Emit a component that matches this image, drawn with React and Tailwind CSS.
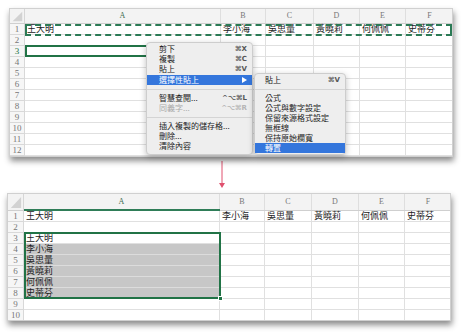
import React from "react";

const CJK = "font-['Noto_Sans_CJK_TC','Noto_Sans',sans-serif]";
const SERIF = "font-['Liberation_Serif',serif]";
const SYM = "font-['DejaVu_Sans',sans-serif]";

const NAMES = ["王大明", "李小海", "吳思量", "黃曉莉", "何佩佩", "史蒂芬"];
const LETTERS = ["A", "B", "C", "D", "E", "F"];

const TOP_COLS = ["w-[15px]", "w-[196px]", "w-[45px]", "w-[48px]", "w-[46px]", "w-[46px]", "w-[48px]"];
const BOT_COLS = ["w-[16px]", "w-[196px]", "w-[45px]", "w-[47px]", "w-[47px]", "w-[46px]", "w-[47px]"];

function Corner() {
  return (
    <svg width="100%" height="100%" viewBox="0 0 16 16" preserveAspectRatio="none">
      <polygon points="14,3 14,14 3,14" fill="#d2d2d2" />
    </svg>
  );
}

function Header({ cols, h, active }) {
  return (
    <div className={`flex ${h} bg-[#f3f3f3] border-b border-[#cfcfcf]`}>
      <div className={`${cols[0]} shrink-0 border-r border-[#d6d6d6]`}>
        <Corner />
      </div>
      {LETTERS.map((l, i) => (
        <div
          key={l}
          className={`${cols[i + 1]} shrink-0 flex items-center justify-center border-r border-[#dedede] text-[8px] ${SERIF} ${
            i === 0 && active ? "text-[#3c6b52]" : "text-[#777]"
          }`}
        >
          {l}
        </div>
      ))}
    </div>
  );
}

function Row({ cols, num, cells, numColor = "text-[#777]", fillA }) {
  return (
    <div className="flex h-[11px]">
      <div
        className={`${cols[0]} shrink-0 bg-[#f6f6f6] border-r border-b border-[#d8d8d8] text-[9px] leading-[10px] text-center ${SERIF} ${numColor}`}
      >
        {num}
      </div>
      {LETTERS.map((l, i) => (
        <div
          key={l}
          className={`${cols[i + 1]} shrink-0 flex items-center border-r border-b pl-[2px] ${
            i === 0 && fillA ? "bg-[#c7c7c7] border-b-[#dcdcdc] border-r-[#e0e0e0]" : "border-[#e0e0e0]"
          }`}
        >
          {cells[i] && (
            <span className={`block h-[10px] text-[9px] leading-[10px] text-[#222] whitespace-nowrap ${CJK}`}>
              {cells[i]}
            </span>
          )}
        </div>
      ))}
    </div>
  );
}

function Item({ label, shortcut, hl, dim, arrow, pl = "pl-[12px]" }) {
  return (
    <div
      className={`flex items-center justify-between h-[10px] ${pl} pr-[5px] text-[8px] leading-[10px] ${
        hl ? "bg-[#3476dc] text-white" : dim ? "text-[#a9a9a9]" : "text-[#222]"
      }`}
    >
      <span className={CJK}>{label}</span>
      {shortcut && (
        <span className={`${SYM} text-[7px] font-bold ${hl ? "text-white" : dim ? "text-[#b5b5b5]" : "text-[#555]"}`}>
          {shortcut}
        </span>
      )}
      {arrow && (
        <svg width="5" height="6" viewBox="0 0 5 6">
          <polygon points="0,0 5,3 0,6" fill="#ffffff" />
        </svg>
      )}
    </div>
  );
}

function Sep() {
  return (
    <div className="h-[8px] flex items-center">
      <div className="h-px w-full bg-[#d4d4d4]" />
    </div>
  );
}

function ContextMenu() {
  return (
    <div className="absolute left-[136px] top-[33px] w-[107px] h-[113px] bg-[#eeeeee] border border-[#cdcdcd] rounded-[4px] shadow-[0_2px_6px_rgba(0,0,0,0.25)] pt-[1px]">
      <Item label="剪下" shortcut="⌘X" />
      <Item label="複製" shortcut="⌘C" />
      <Item label="貼上" shortcut="⌘V" />
      <div className="h-px" />
      <Item label="選擇性貼上" hl arrow />
      <Sep />
      <Item label="智慧查閱..." shortcut="^⌥⌘L" />
      <Item label="同義字..." shortcut="^⌥⌘R" dim />
      <Sep />
      <Item label="插入複製的儲存格..." />
      <Item label="刪除..." />
      <Item label="清除內容" />
    </div>
  );
}

function SubMenu() {
  return (
    <div className="absolute left-[244px] top-[64px] w-[92px] h-[82px] bg-[#eeeeee] border border-[#cdcdcd] rounded-[4px] shadow-[0_2px_6px_rgba(0,0,0,0.25)] pt-[1px]">
      <Item label="貼上" shortcut="⌘V" pl="pl-[10px]" />
      <Sep />
      <Item label="公式" pl="pl-[10px]" />
      <Item label="公式與數字設定" pl="pl-[10px]" />
      <Item label="保留來源格式設定" pl="pl-[10px]" />
      <Item label="無框線" pl="pl-[10px]" />
      <Item label="保持原始欄寬" pl="pl-[10px]" />
      <Item label="轉置" hl pl="pl-[10px]" />
    </div>
  );
}

function TopSheet() {
  const rows = Array.from({ length: 12 }, (_, i) => i + 1);
  return (
    <div className="relative ml-[9px] w-[444px] h-[149px] bg-white border border-[#d0d0d0] shadow-[1px_4px_6px_rgba(0,0,0,0.45)]">
      <div className="overflow-hidden h-full">
        <Header cols={TOP_COLS} h="h-[15px]" active />
        {rows.map((n) => (
          <Row
            key={n}
            cols={TOP_COLS}
            num={n}
            cells={n === 1 ? NAMES : []}
            numColor={n === 3 ? "text-[#217346]" : "text-[#777]"}
          />
        ))}
      </div>
      {/* copy marquee on row 1 */}
      <div className="absolute left-[15px] right-0 top-[15px] h-[12px] border-2 border-dashed border-[#2b7a55]" />
      {/* active cell A3 */}
      <div className="absolute left-[15px] top-[36px] w-[197px] h-[12px] border-2 border-[#217346]" />
      <ContextMenu />
      <SubMenu />
    </div>
  );
}

function BottomSheet() {
  const rows = Array.from({ length: 10 }, (_, i) => i + 1);
  const colA = { 3: "王大明", 4: "李小海", 5: "吳思量", 6: "黃曉莉", 7: "何佩佩", 8: "史蒂芬" };
  return (
    <div className="relative ml-[7px] w-[444px] h-[128px] bg-white border border-[#d0d0d0] shadow-[1px_4px_6px_rgba(0,0,0,0.45)]">
      <div className="overflow-hidden h-full">
        <Header cols={BOT_COLS} h="h-[17px]" active />
        {rows.map((n) => (
          <Row
            key={n}
            cols={BOT_COLS}
            num={n}
            cells={n === 1 ? NAMES : colA[n] ? [colA[n]] : []}
            fillA={n >= 4 && n <= 8}
          />
        ))}
      </div>
      {/* column A header underline */}
      <div className="absolute left-[16px] top-[15px] w-[196px] h-[2px] bg-[#2f7d58]" />
      {/* selection A3:A8 */}
      <div className="absolute left-[16px] top-[38px] w-[197px] h-[67px] border-2 border-[#217346]">
        <div className="absolute -right-[4px] -bottom-[4px] w-[5px] h-[5px] bg-[#217346] border border-white" />
      </div>
    </div>
  );
}

export default function App() {
  return (
    <div className="w-[474px] h-[333px] bg-white pt-[8px] overflow-hidden">
      <TopSheet />
      <div className="h-[36px] pl-[218px]">
        <svg width="8" height="36" viewBox="0 0 8 36">
          <line x1="4" y1="4" x2="4" y2="28" stroke="#e0506e" strokeWidth="1" />
          <polygon points="1,26 7,26 4,31" fill="#e0506e" />
        </svg>
      </div>
      <BottomSheet />
    </div>
  );
}
